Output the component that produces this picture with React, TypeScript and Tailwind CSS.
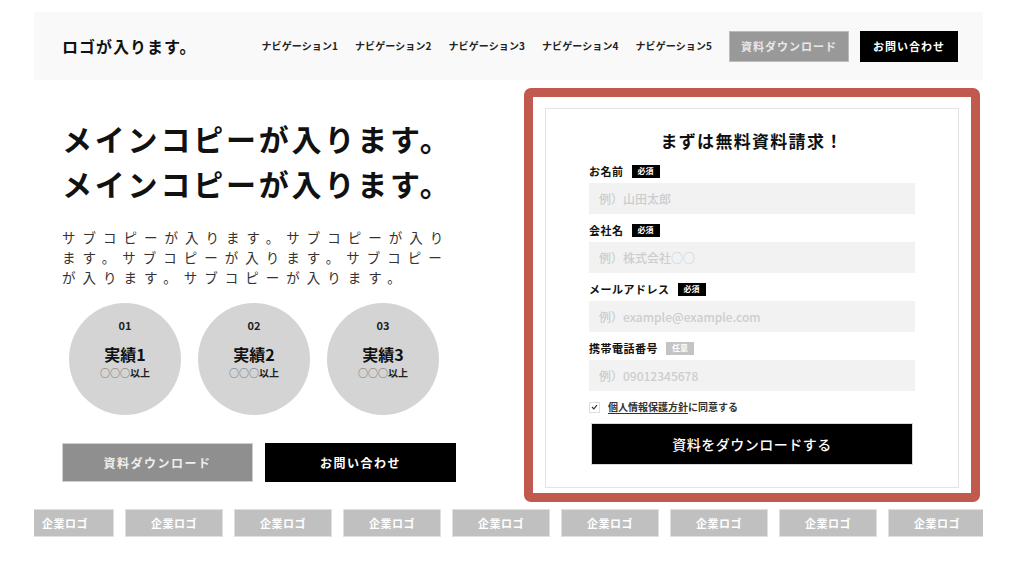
import React from "react";

const FONT = { fontFamily: '"Noto Sans CJK JP", "Noto Sans", sans-serif' };

function Badge({ label, optional }: { label: string; optional?: boolean }) {
  return (
    <span
      className={`ml-[8px] inline-flex h-[13px] w-[28px] items-center justify-center text-[8px] font-bold leading-none text-white ${
        optional ? "bg-[#c4c4c4]" : "bg-black"
      }`}
    >
      {label}
    </span>
  );
}

function Field({ label, badge, optional, placeholder }: { label: string; badge: string; optional?: boolean; placeholder: string }) {
  return (
    <div className="mb-[9px]">
      <div className="mb-[5px] flex h-[14px] items-center">
        <span className="text-[11px] font-bold leading-none tracking-[0.5px] text-[#111]">{label}</span>
        <Badge label={badge} optional={optional} />
      </div>
      <div className="flex h-[31px] items-center bg-[#f2f2f2] pl-[10px] text-[12px] font-medium text-[#cdcdcd]">
        {placeholder}
      </div>
    </div>
  );
}

function Circle({ no, title }: { no: string; title: string }) {
  return (
    <div className="flex h-[112px] w-[112px] flex-col items-center rounded-full bg-[#d4d4d4] pt-[15px]">
      <div className="h-[14px] text-[11px] font-bold leading-[14px] text-[#222]">{no}</div>
      <div className="mt-[11px] h-[22px] text-[16px] font-bold leading-[22px] text-[#111]">{title}</div>
      <div className="mt-[1px] h-[14px] text-[10px] font-bold leading-[14px] text-[#222]">
        <span className="font-normal text-[#666]">○○○</span>以上
      </div>
    </div>
  );
}

export default function App() {
  const navs = ["ナビゲーション1", "ナビゲーション2", "ナビゲーション3", "ナビゲーション4", "ナビゲーション5"];
  return (
    <div className="h-[573px] w-[1024px] overflow-hidden bg-white" style={FONT}>
      <div className="ml-[34px] w-[949px] pt-[12px]">
        {/* header */}
        <header className="flex h-[68px] items-center bg-[#f9f9f9] pl-[28px] pr-[25px]">
          <div className="text-[16px] font-bold leading-none tracking-[1px] text-[#111]">ロゴが入ります。</div>
          <nav className="ml-auto flex items-center gap-[17px]">
            {navs.map((n) => (
              <span key={n} className="text-[10px] font-bold leading-none tracking-[0.1px] text-[#222]">
                {n}
              </span>
            ))}
          </nav>
          <div className="ml-[17px] flex h-[31px] w-[120px] items-center justify-center border border-[#bcbcbc] bg-[#999999] text-[11px] font-bold tracking-[1px] text-[#e8e8e8]">
            資料ダウンロード
          </div>
          <div className="ml-[11px] flex h-[31px] w-[98px] items-center justify-center bg-black text-[11px] font-bold tracking-[1px] text-white">
            お問い合わせ
          </div>
        </header>

        {/* main */}
        <div className="mt-[8px] flex">
          <div className="w-[490px] pl-[28px] pt-[28px]">
            <h1 className="text-[30px] font-bold leading-[45px] tracking-[2.8px] text-[#111]">
              メインコピーが入ります。
              <br />
              メインコピーが入ります。
            </h1>
            <p className="mt-[21px] w-[400px] text-[13.5px] leading-[20px] tracking-[7px] text-[#333]">
              サブコピーが入ります。サブコピーが入ります。サブコピーが入ります。サブコピーが入ります。サブコピーが入ります。
            </p>
            <div className="ml-[7px] mt-[16px] flex gap-[17px]">
              <Circle no="01" title="実績1" />
              <Circle no="02" title="実績2" />
              <Circle no="03" title="実績3" />
            </div>
            <div className="mt-[28px] flex gap-[12px]">
              <div className="flex h-[39px] w-[191px] items-center justify-center border border-[#cfcfcf] bg-[#8f8f8f] text-[12px] font-bold tracking-[1.5px] text-[#eeeeee]">
                資料ダウンロード
              </div>
              <div className="flex h-[39px] w-[191px] items-center justify-center bg-black text-[12px] font-bold tracking-[1.5px] text-white">
                お問い合わせ
              </div>
            </div>
          </div>

          {/* form frame */}
          <div className="h-[414px] w-[456px] rounded-[7px] border-[9px] border-[#c05a4f] bg-white px-[12px] pb-[5px] pt-[11px]">
            <div className="h-full border border-[#e3e3e3] px-[43px] pt-[20px]">
              <h2 className="mb-[11px] text-center text-[17px] font-bold leading-[24px] tracking-[1.3px] text-[#111]">
                まずは無料資料請求！
              </h2>
              <Field label="お名前" badge="必須" placeholder="例）山田太郎" />
              <Field label="会社名" badge="必須" placeholder="例）株式会社○○" />
              <Field label="メールアドレス" badge="必須" placeholder="例）example@example.com" />
              <Field label="携帯電話番号" badge="任意" optional placeholder="例）09012345678" />
              <div className="flex h-[14px] items-center">
                <span className="flex h-[11px] w-[11px] items-center justify-center border border-[#dddddd] bg-white">
                  <svg width="7" height="6" viewBox="0 0 7 6" fill="none">
                    <path d="M1 3 L2.8 4.8 L6 1.2" stroke="#333" strokeWidth="1.2" />
                  </svg>
                </span>
                <span className="ml-[8px] text-[10px] font-bold leading-none text-[#333]">
                  <span className="underline decoration-[#333] underline-offset-2">個人情報保護方針</span>に同意する
                </span>
              </div>
              <div className="mx-[2px] mt-[9px] flex h-[42px] items-center justify-center border border-[#d8d8d8] bg-black text-[14px] font-medium tracking-[0.5px] text-white">
                資料をダウンロードする
              </div>
            </div>
          </div>
        </div>

        {/* logos */}
        <div className="mt-[7px] overflow-hidden">
          <div className="-ml-[18px] flex gap-[11px]">
            {Array.from({ length: 9 }).map((_, i) => (
              <div
                key={i}
                className="flex h-[28px] w-[98px] shrink-0 items-center justify-center border border-[#e0e0e0] bg-[#c0c0c0] text-[11px] font-bold tracking-[0.5px] text-white"
              >
                企業ロゴ
              </div>
            ))}
          </div>
        </div>
      </div>
    </div>
  );
}
